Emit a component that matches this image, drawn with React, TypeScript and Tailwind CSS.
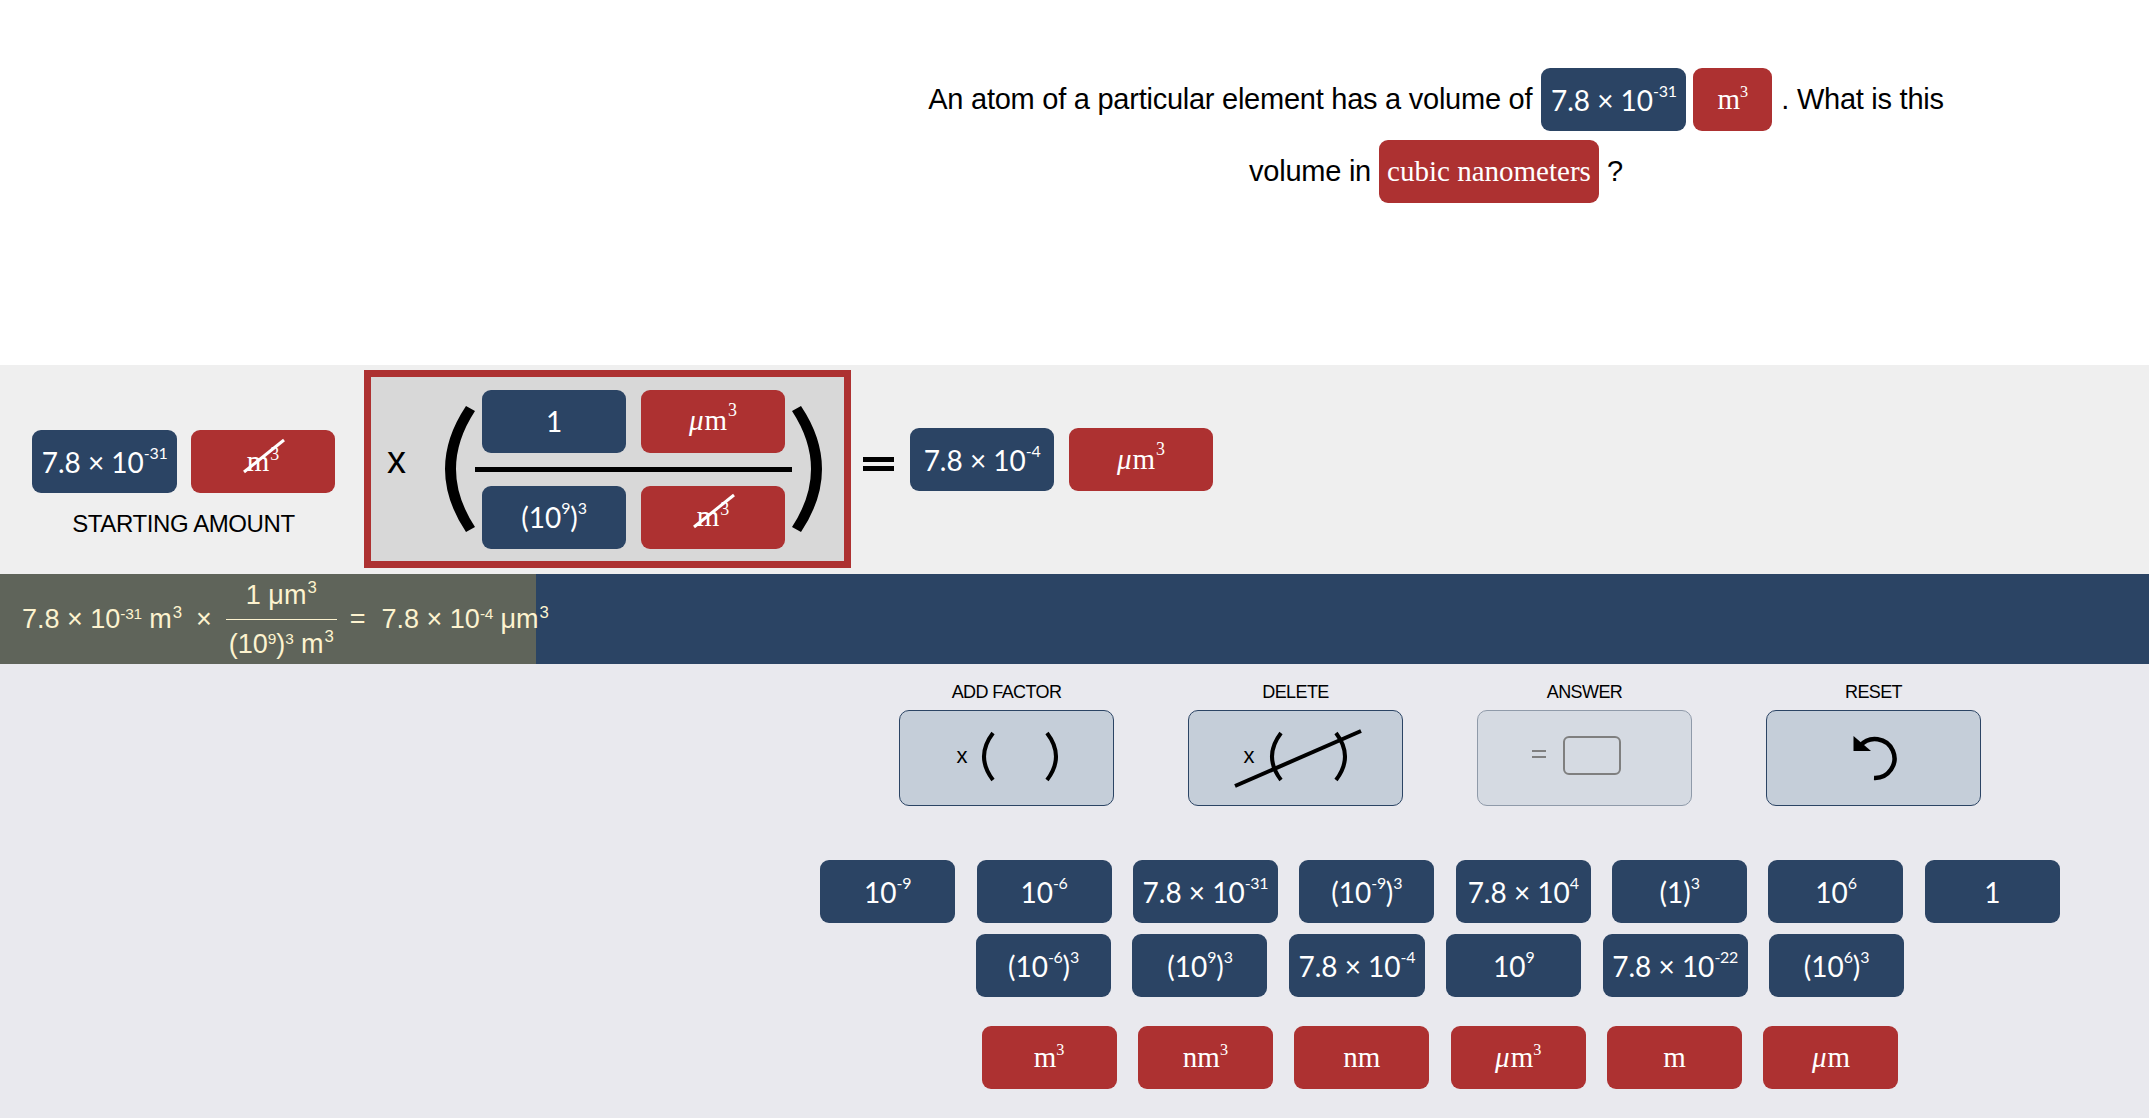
import type { ReactNode } from 'react';

const SANS = 'font-["Liberation_Sans",Arial,sans-serif]';

// exponent on number tiles
function Sup({ children }: { children: ReactNode }) {
  return <sup className="top-[-0.54em] text-[0.57em] tracking-[-0.3px]">{children}</sup>;
}

// exponent on unit tiles in the tray
function USup({ children }: { children: ReactNode }) {
  return <sup className="top-[-0.45em] text-[0.56em]">{children}</sup>;
}

// larger exponent used in the workspace and the worked equation
function BigSup({ children, className = '' }: { children: ReactNode; className?: string }) {
  return <sup className={`top-[-0.6em] ml-[1px] text-[0.62em] ${className}`}>{children}</sup>;
}

function NumTile({ w = 'w-[135px]', children }: { w?: string; children: ReactNode }) {
  return (
    <div className={`flex h-[63px] shrink-0 items-center justify-center whitespace-nowrap rounded-[9px] bg-[#2b4464] font-['Lato',sans-serif] text-[28px] text-white ${w}`}>
      {children}
    </div>
  );
}

function UnitTile({ w = 'w-[135px]', children }: { w?: string; children: ReactNode }) {
  return (
    <div className={`flex h-[63px] shrink-0 items-center justify-center whitespace-nowrap rounded-[9px] bg-[#ad3131] font-['Liberation_Serif',serif] text-[29px] text-white ${w}`}>
      {children}
    </div>
  );
}

function Micro() {
  return <i className="mr-[1px]">μ</i>;
}

function CrossedM3() {
  return (
    <span className="relative inline-block">
      m<BigSup>3</BigSup>
      <svg className="absolute left-[-5px] top-[-2px]" width="44" height="36" viewBox="0 0 44 36">
        <path d="M2 34 L42 2" stroke="#fff" strokeWidth="3" fill="none" />
      </svg>
    </span>
  );
}

function BigParen({ flip = false }: { flip?: boolean }) {
  return (
    <svg className={`shrink-0 ${flip ? '-scale-x-100' : ''}`} width="30" height="126" viewBox="0 0 30 126">
      <path d="M21 0 Q-21 63 21 126 L30 121 Q-8 63 30 5 Z" fill="#000" />
    </svg>
  );
}

function ActionButton({ label, disabled, children }: { label: string; disabled?: boolean; children: ReactNode }) {
  return (
    <div className="flex w-[215px] flex-col items-center">
      <div className="mb-[6px] h-[24px] text-[18px] leading-[24px] tracking-[-0.6px] text-black">{label}</div>
      <button
        className={`block h-[96px] w-[215px] rounded-[10px] border ${disabled ? 'border-[#8f9aa9] bg-[#d5dae2]' : 'border-[#2b4464] bg-[#c5ced9]'}`}
      >
        <svg width="213" height="94" viewBox="1 1 213 94" className="block">
          {children}
        </svg>
      </button>
    </div>
  );
}

export default function App() {
  return (
    <div className={`h-[1118px] w-full overflow-hidden bg-white text-black ${SANS}`}>
      {/* Question */}
      <section className="flex h-[365px]">
        <div className="w-[731px] shrink-0" />
        <div className="flex flex-1 flex-col gap-[9px] pr-[8px] pt-[68px] text-[29px] tracking-[-0.25px]">
          <div className="flex items-center justify-center">
            <span>An atom of a particular element has a volume of</span>
            <div className="ml-[9px] tracking-normal"><NumTile w="w-[145px]">7.8 × 10<Sup>-31</Sup></NumTile></div>
            <div className="ml-[7px] tracking-normal"><UnitTile w="w-[79px]">m<USup>3</USup></UnitTile></div>
            <span className="ml-[9px]">. What is this</span>
          </div>
          <div className="flex items-center justify-center">
            <span>volume in</span>
            <div className="mx-[8px] tracking-normal"><UnitTile w="w-[220px]">cubic nanometers</UnitTile></div>
            <span>?</span>
          </div>
        </div>
      </section>

      {/* Equation workspace */}
      <section className="flex h-[209px] items-start bg-[#efefef]">
        <div className="ml-[32px] mt-[65px] flex w-[303px] shrink-0 flex-col items-center">
          <div className="flex gap-[14px]">
            <NumTile w="w-[145px]">7.8 × 10<Sup>-31</Sup></NumTile>
            <UnitTile w="w-[144px]"><CrossedM3 /></UnitTile>
          </div>
          <div className="mt-[19px] text-[24px] leading-[24px] tracking-[-0.4px]">STARTING AMOUNT</div>
        </div>

        <div className="ml-[29px] mt-[5px] flex h-[198px] w-[487px] shrink-0 items-center border-[7px] border-[#ad3131] bg-[#d8d8d8] pl-[16px]">
          <span className="mt-[-18px] w-[58px] text-[38px] leading-none">x</span>
          <BigParen />
          <div className="flex w-[317px] shrink-0 flex-col items-center">
            <div className="flex gap-[15px]">
              <NumTile w="w-[144px]">1</NumTile>
              <UnitTile w="w-[144px]"><Micro />m<BigSup>3</BigSup></UnitTile>
            </div>
            <div className="my-[14px] h-[5px] w-full bg-black" />
            <div className="flex gap-[15px]">
              <NumTile w="w-[144px]">(10<Sup>9</Sup>)<Sup>3</Sup></NumTile>
              <UnitTile w="w-[144px]"><CrossedM3 /></UnitTile>
            </div>
          </div>
          <BigParen flip />
        </div>

        <div className="ml-[12px] mt-[92px] flex w-[31px] shrink-0 flex-col gap-[4px]">
          <div className="h-[5px] bg-black" />
          <div className="h-[5px] bg-black" />
        </div>
        <div className="ml-[16px] mt-[63px] flex gap-[15px]">
          <NumTile w="w-[144px]">7.8 × 10<Sup>-4</Sup></NumTile>
          <UnitTile w="w-[144px]"><Micro />m<BigSup>3</BigSup></UnitTile>
        </div>
      </section>

      {/* Progress bar with worked equation */}
      <section className="relative flex h-[90px] items-center bg-[#2b4464]">
        <div className="absolute inset-y-0 left-0 w-[536px] bg-[#5f645a]" />
        <div className="relative flex items-center whitespace-nowrap pl-[22px] text-[27px] text-[#fdf3cf]">
          <span>7.8 × 10<Sup>-31</Sup> m<BigSup>3</BigSup></span>
          <span className="ml-[14px]">×</span>
          <div className="ml-[14px] flex w-[111px] flex-col items-center leading-[36px]">
            <span className="mb-[6px]">1 μm<BigSup>3</BigSup></span>
            <div className="h-[1px] w-full bg-[#fdf3cf]" />
            <span className="mt-[6px]">(10<Sup>9</Sup>)<Sup>3</Sup> m<BigSup>3</BigSup></span>
          </div>
          <span className="ml-[13px]">=</span>
          <span className="ml-[16px]">7.8 × 10<Sup>-4</Sup> μm<BigSup>3</BigSup></span>
        </div>
      </section>

      {/* Tools and tiles */}
      <section className="flex h-[454px] bg-[#e9e9ee]">
        <div className="w-[731px] shrink-0" />
        <div className="flex flex-1 flex-col items-center pt-[16px]">
          <div className="flex gap-[74px]">
            <ActionButton label="ADD FACTOR">
              <text x="63" y="53" textAnchor="middle" fontSize="22" fill="#000" fontFamily="Liberation Sans">x</text>
              <path d="M94 23 Q76 46.5 94 70" stroke="#000" strokeWidth="4" fill="none" />
              <path d="M148 23 Q166 46.5 148 70" stroke="#000" strokeWidth="4" fill="none" />
            </ActionButton>
            <ActionButton label="DELETE">
              <text x="61" y="53" textAnchor="middle" fontSize="22" fill="#000" fontFamily="Liberation Sans">x</text>
              <path d="M93 23 Q75 46.5 93 70" stroke="#000" strokeWidth="4" fill="none" />
              <path d="M148 23 Q166 46.5 148 70" stroke="#000" strokeWidth="4" fill="none" />
              <path d="M47 76 L173 21" stroke="#000" strokeWidth="4" fill="none" />
            </ActionButton>
            <ActionButton label="ANSWER" disabled>
              <path d="M55 41 H69 M55 47 H69" stroke="#7f7f7f" strokeWidth="2" fill="none" />
              <rect x="87" y="27" width="56" height="37" rx="5" stroke="#7f7f7f" strokeWidth="2" fill="none" />
            </ActionButton>
            <ActionButton label="RESET">
              <path d="M108 68 A19.5 19.5 0 1 0 94 36" stroke="#000" strokeWidth="4.5" fill="none" />
              <path d="M87.5 26 V41 H105 Z" fill="#000" />
            </ActionButton>
          </div>

          <div className="mt-[54px] flex gap-[21.4px]">
            <NumTile>10<Sup>-9</Sup></NumTile>
            <NumTile>10<Sup>-6</Sup></NumTile>
            <NumTile w="w-[145px]">7.8 × 10<Sup>-31</Sup></NumTile>
            <NumTile>(10<Sup>-9</Sup>)<Sup>3</Sup></NumTile>
            <NumTile>7.8 × 10<Sup>4</Sup></NumTile>
            <NumTile>(1)<Sup>3</Sup></NumTile>
            <NumTile>10<Sup>6</Sup></NumTile>
            <NumTile>1</NumTile>
          </div>
          <div className="mt-[11px] flex gap-[21.4px]">
            <NumTile>(10<Sup>-6</Sup>)<Sup>3</Sup></NumTile>
            <NumTile>(10<Sup>9</Sup>)<Sup>3</Sup></NumTile>
            <NumTile w="w-[136px]">7.8 × 10<Sup>-4</Sup></NumTile>
            <NumTile>10<Sup>9</Sup></NumTile>
            <NumTile w="w-[145px]">7.8 × 10<Sup>-22</Sup></NumTile>
            <NumTile>(10<Sup>6</Sup>)<Sup>3</Sup></NumTile>
          </div>
          <div className="mt-[29px] flex gap-[21.4px]">
            <UnitTile>m<USup>3</USup></UnitTile>
            <UnitTile>nm<USup>3</USup></UnitTile>
            <UnitTile>nm</UnitTile>
            <UnitTile><Micro />m<USup>3</USup></UnitTile>
            <UnitTile>m</UnitTile>
            <UnitTile><Micro />m</UnitTile>
          </div>
        </div>
      </section>
    </div>
  );
}
